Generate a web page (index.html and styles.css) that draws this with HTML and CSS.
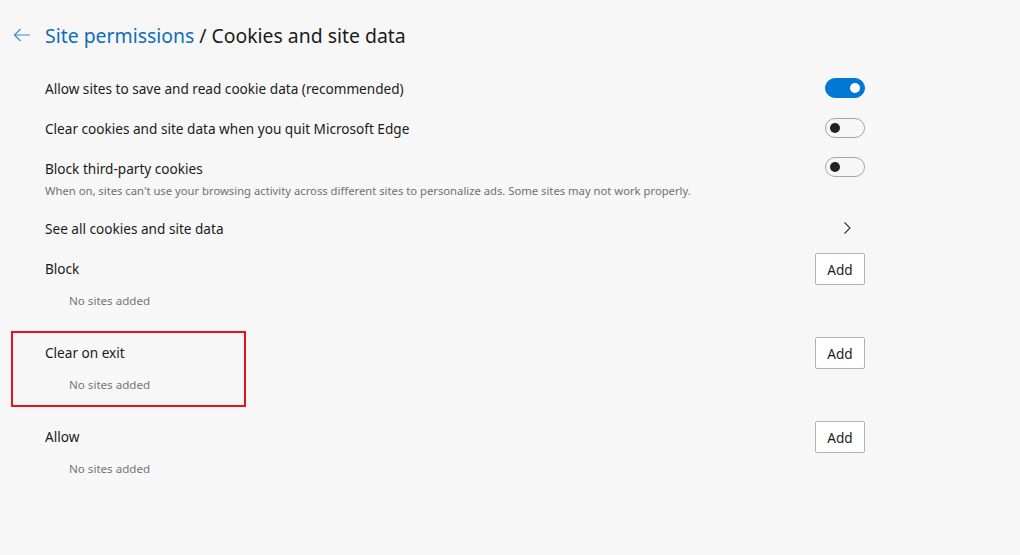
FILE: index.html
```html
<!DOCTYPE html>
<html>
<head>
<meta charset="utf-8">
<link rel="stylesheet" href="styles.css">
</head>
<body>
<div class="page">
  <header class="header">
    <span class="back">
      <svg width="18" height="14" viewBox="0 0 18 14"><path d="M17 7H1.5M7.5 1L1.5 7l6 6" fill="none" stroke="#3b8fd9" stroke-width="1.2"/></svg>
    </span>
    <h1 class="title"><span class="link">Site permissions</span> / Cookies and site data</h1>
  </header>
  <main class="content">
    <div class="row">
      <div class="label">Allow sites to save and read cookie data (recommended)</div>
      <span class="toggle on"><span class="knob"></span></span>
    </div>
    <div class="row">
      <div class="label">Clear cookies and site data when you quit Microsoft Edge</div>
      <span class="toggle"><span class="knob"></span></span>
    </div>
    <div class="row row-desc">
      <div class="text">
        <div class="label">Block third-party cookies</div>
        <div class="desc">When on, sites can't use your browsing activity across different sites to personalize ads. Some sites may not work properly.</div>
      </div>
      <span class="toggle"><span class="knob"></span></span>
    </div>
    <div class="row">
      <div class="label">See all cookies and site data</div>
      <span class="chev">
        <svg width="10" height="14" viewBox="0 0 10 14"><path d="M2.5 1.5L8 7l-5.5 5.5" fill="none" stroke="#333" stroke-width="1.1"/></svg>
      </span>
    </div>
    <section class="list">
      <div class="list-head">
        <div class="label">Block</div>
        <button class="add">Add</button>
      </div>
      <div class="empty">No sites added</div>
    </section>
    <section class="list highlighted">
      <div class="list-head">
        <div class="label">Clear on exit</div>
        <button class="add">Add</button>
      </div>
      <div class="empty">No sites added</div>
      <span class="redbox"></span>
    </section>
    <section class="list">
      <div class="list-head">
        <div class="label">Allow</div>
        <button class="add">Add</button>
      </div>
      <div class="empty">No sites added</div>
    </section>
  </main>
</div>
</body>
</html>
```
FILE: styles.css
```css
html, body { margin: 0; padding: 0; }
body {
  background: #f7f7f7;
  font-family: "Noto Sans", "Open Sans", sans-serif;
  color: #1b1b1b;
  width: 1020px;
  height: 555px;
  overflow: hidden;
}
.header {
  display: flex;
  align-items: center;
  height: 66px;
  padding-top: 2px;
  padding-left: 13px;
}
.back { width: 32px; display: flex; align-items: center; }
.title {
  margin: 0;
  font-size: 19.4px;
  font-weight: 400;
  color: #1b1b1b;
}
.link { color: #0f6cbd; }
.content {
  width: 820px;
  margin-left: 45px;
}
.row {
  display: flex;
  align-items: center;
  justify-content: space-between;
  min-height: 40px;
}
.row-desc { align-items: flex-start; padding-top: 11px; min-height: 49px; }
.row-desc .toggle { margin-top: -2px; }
.label { font-size: 13.6px; color: #1b1b1b; }
.desc { font-size: 11.25px; color: #707070; margin-top: 5px; }
.toggle {
  height: 18px;
  width: 30px;
  border: 1px solid #a6a6a6;
  border-radius: 10px;
  display: flex; align-items: center;
  padding: 0 4px;
  box-sizing: content-box;
}
.knob { width: 10px; height: 10px; border-radius: 50%; background: #222; }
.toggle.on { background: #0078d4; border-color: #0078d4; justify-content: flex-end; }
.toggle.on .knob { background: #fff; }
.chev { width: 20px; margin-right: 8px; display: flex; justify-content: center; }
.list { position: relative; }
.list-head {
  display: flex; align-items: center; justify-content: space-between;
  height: 40px;
}
.add {
  width: 50px; height: 32px;
  background: #fff;
  border: 1px solid #b3b3b3;
  border-radius: 2px;
  font-family: inherit;
  font-size: 13.6px;
  color: #1b1b1b;
  padding: 0;
  margin-top: 2px;
}
.empty {
  font-size: 11.6px;
  color: #767676;
  padding-left: 24px;
  padding-top: 5px;
  height: 39px;
}
.redbox {
  position: absolute;
  left: -34px; top: -1px;
  width: 231px; height: 72px;
  border: 2px solid #e81123;
}
```
